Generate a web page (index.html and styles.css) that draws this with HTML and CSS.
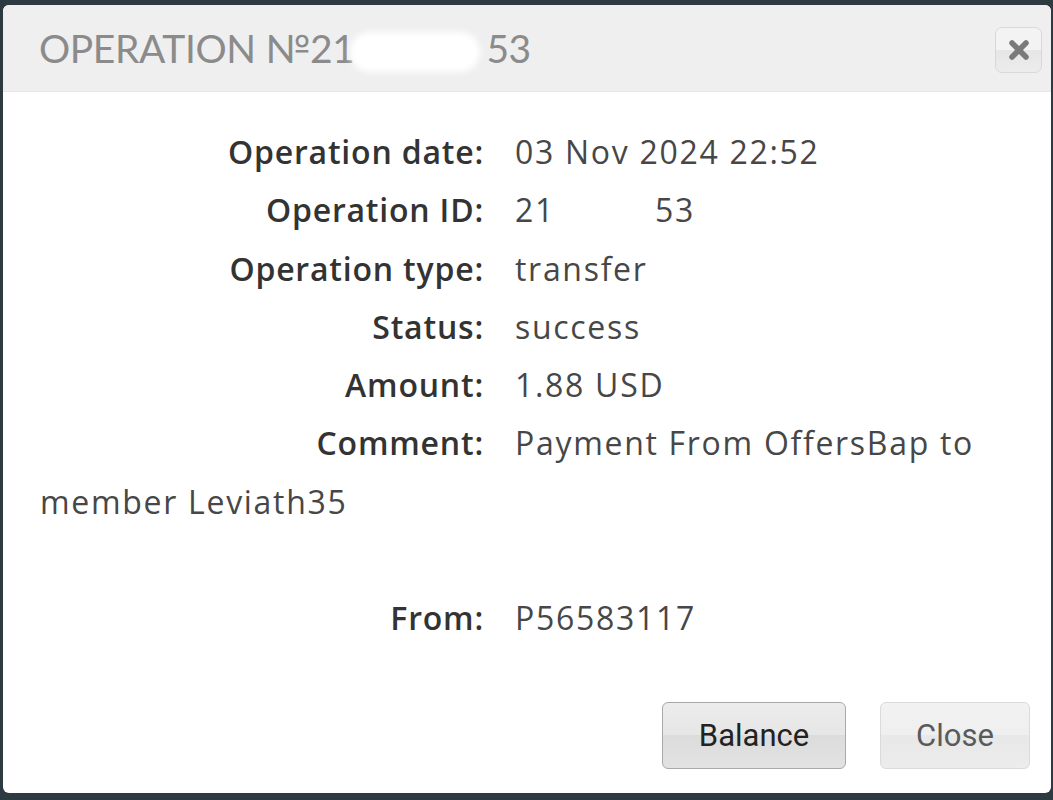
FILE: index.html
```html
<!DOCTYPE html>
<html>
<head>
<meta charset="utf-8">
<link rel="stylesheet" href="styles.css">
</head>
<body>
<div class="dialog">
  <div class="header">
    <div class="title">OPERATION №21<span class="blob"></span>53</div>
    <button class="xbtn" aria-label="close">
      <svg width="24" height="24" viewBox="0 0 24 24"><path d="M5 5 L19 19 M19 5 L5 19" stroke="#7a7a7a" stroke-width="5.5" stroke-linecap="round"/></svg>
    </button>
  </div>
  <div class="body">
    <div class="row"><span class="label">Operation date:</span><span class="value">03 Nov 2024 22:52</span></div>
    <div class="row"><span class="label">Operation ID:</span><span class="value">21<span class="gap"></span>53</span></div>
    <div class="row"><span class="label">Operation type:</span><span class="value">transfer</span></div>
    <div class="row"><span class="label">Status:</span><span class="value">success</span></div>
    <div class="row"><span class="label">Amount:</span><span class="value">1.88 USD</span></div>
    <div class="row"><span class="label">Comment:</span><span class="value">Payment From OffersBap to</span><br><span class="value">member Leviath35</span><br>&nbsp;</div>
    <div class="row"><span class="label">From:</span><span class="value">P56583117</span></div>
  </div>
  <div class="footer">
    <button class="btn primary">Balance</button>
    <button class="btn secondary">Close</button>
  </div>
</div>
</body>
</html>
```
FILE: styles.css
```css
html, body {
  margin: 0;
  padding: 0;
  height: 100%;
}
body {
  background: #2e3a42;
  overflow: hidden;
}
.dialog {
  margin: 5px 2px 0 3px;
  height: 788px;
  background: #fff;
  border-radius: 6px;
  overflow: hidden;
  display: flex;
  flex-direction: column;
}
.header {
  height: 87px;
  flex: none;
  background: #efefef;
  border-bottom: 1px solid #e6e6e6;
  box-sizing: border-box;
  display: flex;
  align-items: center;
  justify-content: space-between;
  padding: 0 9px 0 36px;
}
.title {
  font-family: "Lato", sans-serif;
  font-weight: 400;
  font-size: 39px;
  letter-spacing: -0.4px;
  color: #8b8b8b;
  display: flex;
  align-items: center;
  white-space: nowrap;
}
.blob {
  display: inline-block;
  width: 130px;
  height: 40px;
  margin: 0 6px 0 -4px;
  background: #fff;
  border-radius: 22px;
  filter: blur(3px);
  transform: translateY(4px);
}
.xbtn {
  width: 47px;
  height: 46px;
  border: 1px solid #d8d8d8;
  border-radius: 7px;
  background: linear-gradient(#f3f3f3, #f3f3f3 50%, #e6e6e6 50%, #ececec);
  display: flex;
  align-items: center;
  justify-content: center;
  padding: 0;
  margin-top: 3px;
}
.body {
  flex: 1;
  padding: 31px 20px 0 37px;
  font-family: "Open Sans", sans-serif;
  font-size: 32px;
  line-height: 58.3px;
  color: #444;
}
.row {
  margin: 0;
}
.label {
  display: inline-block;
  width: 444px;
  text-align: right;
  font-weight: 600;
  color: #333;
  letter-spacing: 0.8px;
  margin-right: 31px;
}
.value {
  font-weight: 400;
  color: #474747;
  letter-spacing: 1.7px;
}
.gap {
  display: inline-block;
  width: 100px;
}
.footer {
  flex: none;
  display: flex;
  justify-content: flex-end;
  gap: 34px;
  padding: 0 21px 24px 0;
}
.btn {
  height: 67px;
  border-radius: 6px;
  font-family: "Roboto", sans-serif;
  font-size: 31px;
  padding: 0;
}
.primary {
  width: 184px;
  border: 1px solid #a9a9a9;
  background: linear-gradient(#ececec, #e6e6e6 50%, #dcdcdc 50%, #e2e2e2);
  color: #222;
}
.secondary {
  width: 150px;
  border: 1px solid #dadada;
  background: linear-gradient(#f2f2f2, #efefef 50%, #e8e8e8 50%, #ececec);
  color: #5a5a5a;
}
```
